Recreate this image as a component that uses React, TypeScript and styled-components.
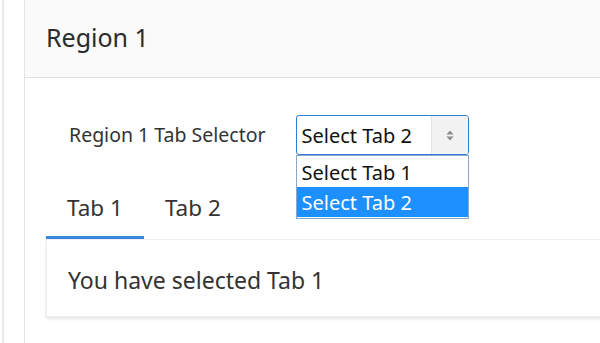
import React from 'react';
import styled, { createGlobalStyle } from 'styled-components';

const GlobalStyle = createGlobalStyle`
  html, body {
    margin: 0;
    padding: 0;
    background: #ffffff;
    overflow: hidden;
  }
  body {
    font-family: 'Segoe UI', 'Noto Sans', 'Open Sans', sans-serif;
    color: #323130;
  }
`;

const Page = styled.div`
  display: flex;
  height: 343px;
  padding-left: 2px;
`;

const Rail = styled.div`
  width: 20px;
  flex-shrink: 0;
  border-left: 2px solid #e9e9e9;
`;

const Region = styled.section`
  min-width: 640px;
  border-left: 1px solid #e3e3e3;
  display: flex;
  flex-direction: column;
`;

const Header = styled.header`
  height: 78px;
  box-sizing: border-box;
  display: flex;
  align-items: center;
  padding: 0 0 4px 21px;
  background: #fafafa;
  border-bottom: 1px solid #e3e3e3;
`;

const Title = styled.h2`
  margin: 0;
  font-size: 25px;
  font-weight: 400;
  color: #2b2b2b;
`;

const Body = styled.div`
  padding: 37px 0 0 21px;
  display: flex;
  flex-direction: column;
`;

const FormRow = styled.div`
  display: flex;
  align-items: flex-start;
  padding-left: 23px;
  gap: 30px;
`;

const Label = styled.label`
  font-size: 19.5px;
  line-height: 40px;
  color: #333333;
  white-space: nowrap;
`;

const SelectWrap = styled.div`
  position: relative;
  width: 173px;
`;

const SelectBox = styled.div`
  height: 40px;
  box-sizing: border-box;
  display: flex;
  align-items: stretch;
  border: 1px solid #2f7fd8;
  border-radius: 3px;
  background: #ffffff;
  overflow: hidden;
`;

const SelectValue = styled.span`
  flex: 1;
  display: flex;
  align-items: center;
  padding-left: 5px;
  font-size: 20px;
  color: #111111;
  white-space: nowrap;
`;

const ArrowCell = styled.span`
  width: 36px;
  flex-shrink: 0;
  display: flex;
  align-items: center;
  justify-content: center;
  background: #f2f2f2;
  border-left: 1px solid #e4e4e4;
`;

const ListBox = styled.ul`
  position: absolute;
  top: 40px;
  left: 0;
  right: 0;
  margin: 0;
  padding: 1px 0;
  list-style: none;
  background: #ffffff;
  border: 1px solid #8aa6c8;
  z-index: 2;
`;

const Option = styled.li<{ $selected?: boolean }>`
  height: 30px;
  display: flex;
  align-items: center;
  padding-left: 5px;
  font-size: 20px;
  white-space: nowrap;
  color: ${(p) => (p.$selected ? '#ffffff' : '#111111')};
  background: ${(p) => (p.$selected ? '#1e8fff' : '#ffffff')};
`;

const Tabs = styled.div`
  display: flex;
  margin-top: 34px;
`;

const Tab = styled.div<{ $active?: boolean }>`
  height: 50px;
  box-sizing: border-box;
  padding: 0 21px 11px;
  display: flex;
  align-items: center;
  font-size: 22.5px;
  color: #333333;
  border-bottom: 3px solid ${(p) => (p.$active ? '#3a87e0' : 'transparent')};
`;

const Panel = styled.div`
  height: 78px;
  box-sizing: border-box;
  display: flex;
  align-items: center;
  padding: 3px 0 0 21px;
  border: 1px solid #eeeeee;
  box-shadow: 0 2px 3px rgba(0, 0, 0, 0.1);
  font-size: 23px;
  color: #333333;
`;

const UpDown = () => (
  <svg width="8" height="11" viewBox="0 0 8 11">
    <path d="M4 0.5 L7.5 4.5 H0.5 Z" fill="#8a8a8a" />
    <path d="M4 10.5 L7.5 6.5 H0.5 Z" fill="#8a8a8a" />
  </svg>
);

export default function App() {
  return (
    <>
      <GlobalStyle />
      <Page>
        <Rail />
        <Region>
          <Header>
            <Title>Region 1</Title>
          </Header>
          <Body>
            <FormRow>
              <Label>Region 1 Tab Selector</Label>
              <SelectWrap>
                <SelectBox>
                  <SelectValue>Select Tab 2</SelectValue>
                  <ArrowCell>
                    <UpDown />
                  </ArrowCell>
                </SelectBox>
                <ListBox>
                  <Option>Select Tab 1</Option>
                  <Option $selected>Select Tab 2</Option>
                </ListBox>
              </SelectWrap>
            </FormRow>
            <Tabs>
              <Tab $active>Tab 1</Tab>
              <Tab>Tab 2</Tab>
            </Tabs>
            <Panel>You have selected Tab 1</Panel>
          </Body>
        </Region>
      </Page>
    </>
  );
}
